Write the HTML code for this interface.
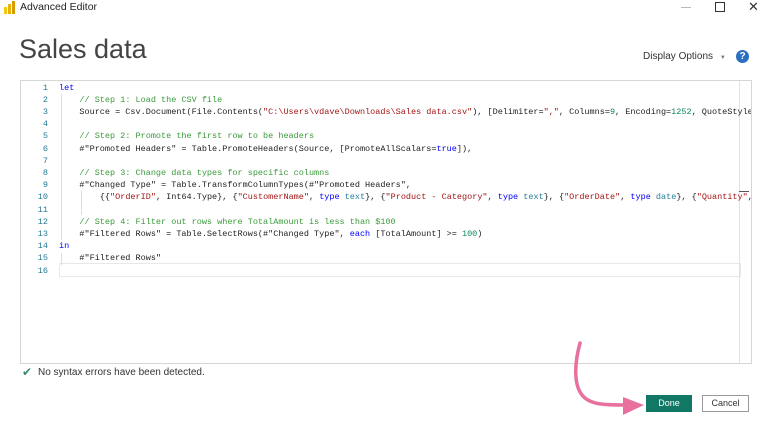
<!DOCTYPE html>
<html><head><meta charset="utf-8"><style>
body{margin:0;width:768px;height:421px;background:#fff;position:relative;overflow:hidden;font-family:"Liberation Sans",sans-serif;}
.abs{position:absolute;}
.code{position:absolute;left:20px;top:80px;width:730px;height:282px;border:1px solid #d6d6d6;overflow:hidden;}
.ln{position:absolute;left:0;width:27px;text-align:right;font-family:"Liberation Mono",monospace;font-size:8.5px;color:#237893;}
.tx{position:absolute;left:38px;white-space:pre;font-family:"Liberation Mono",monospace;font-size:8.5px;color:#222;}
.k{color:#0000ff}.c{color:#3b9a3b}.s{color:#a31515}.n{color:#098658}.t{color:#267f99}
</style></head><body>
<svg class="abs" style="left:3px;top:1px" width="14" height="13"><rect x="1" y="6" width="3" height="7" fill="#f2c811"/><rect x="5" y="3" width="3" height="10" fill="#e8b10a"/><rect x="9" y="0" width="3" height="13" fill="#d69c00"/></svg>
<div class="abs" style="left:20px;top:1px;font-size:10.5px;color:#222">Advanced Editor</div>
<div class="abs" style="left:681px;top:7px;width:10px;height:1px;background:#bbb"></div>
<div class="abs" style="left:715px;top:2px;width:8px;height:8px;border:1px solid #333"></div>
<div class="abs" style="left:748px;top:-1px;font-size:13px;color:#333">✕</div>
<div class="abs" style="left:19px;top:34px;font-size:27px;color:#444">Sales data</div>
<div class="abs" style="left:643px;top:51px;font-size:10px;color:#333">Display Options <span style="font-size:6px;color:#777;margin-left:4px">▼</span></div>
<div class="abs" style="left:736px;top:50px;width:13px;height:13px;border-radius:50%;background:#2a6fc0;color:#fff;font-size:10px;font-weight:bold;text-align:center;line-height:13px">?</div>
<div class="code">
<div class="abs" style="left:718px;top:0;width:1px;height:282px;background:#e2e2e2"></div>
<div class="abs" style="left:718px;top:110px;width:10px;height:1px;background:#555"></div>
<div class="abs" style="left:38px;top:182px;width:680px;height:12px;border:1px solid #e8e8e8"></div>
<div class="abs" style="left:40px;top:13px;width:1px;height:146px;background:#ddd"></div>
<div class="abs" style="left:40px;top:172px;width:1px;height:12px;background:#ddd"></div>
<div class="abs" style="left:60px;top:110px;width:1px;height:24px;background:#ddd"></div>
<div id="c"></div>
</div>
<script>
var L=[
'<span class="k">let</span>',
'    <span class="c">// Step 1: Load the CSV file</span>',
'    Source = Csv.Document(File.Contents(<span class="s">"C:\\Users\\vdave\\Downloads\\Sales data.csv"</span>), [Delimiter=<span class="s">","</span>, Columns=<span class="n">9</span>, Encoding=<span class="n">1252</span>, QuoteStyle',
'',
'    <span class="c">// Step 2: Promote the first row to be headers</span>',
'    #"Promoted Headers" = Table.PromoteHeaders(Source, [PromoteAllScalars=<span class="k">true</span>]),',
'',
'    <span class="c">// Step 3: Change data types for specific columns</span>',
'    #"Changed Type" = Table.TransformColumnTypes(#"Promoted Headers",',
'        {{<span class="s">"OrderID"</span>, Int64.Type}, {<span class="s">"CustomerName"</span>, <span class="k">type</span> <span class="t">text</span>}, {<span class="s">"Product - Category"</span>, <span class="k">type</span> <span class="t">text</span>}, {<span class="s">"OrderDate"</span>, <span class="k">type</span> <span class="t">date</span>}, {<span class="s">"Quantity"</span>,',
'',
'    <span class="c">// Step 4: Filter out rows where TotalAmount is less than $100</span>',
'    #"Filtered Rows" = Table.SelectRows(#"Changed Type", <span class="k">each</span> [TotalAmount] >= <span class="n">100</span>)',
'<span class="k">in</span>',
'    #"Filtered Rows"',
''];
var h='';for(var i=0;i<16;i++){var y=1.5+i*12.2;h+='<div class="ln" style="top:'+y+'px">'+(i+1)+'</div><div class="tx" style="top:'+y+'px">'+L[i]+'</div>';}
document.getElementById('c').innerHTML=h;
</script>
<div class="abs" style="left:22px;top:365px;color:#3a8a6a;font-size:12px">✔</div>
<div class="abs" style="left:38px;top:367px;font-size:10px;color:#333">No syntax errors have been detected.</div>
<svg class="abs" style="left:560px;top:330px" width="100" height="91"><path d="M20 13 C14 35 14 55 22 65 C30 75 45 75 66 75" fill="none" stroke="#e8709f" stroke-width="3.5" stroke-linecap="round"/><polygon points="63,67 84,75 63,85" fill="#e8709f"/></svg>
<div class="abs" style="left:646px;top:395px;width:46px;height:17px;background:#117865;color:#fff;font-size:9px;text-align:center;line-height:17px">Done</div>
<div class="abs" style="left:702px;top:395px;width:45px;height:15px;border:1px solid #999;color:#333;font-size:9px;text-align:center;line-height:15px">Cancel</div>
</body></html>
